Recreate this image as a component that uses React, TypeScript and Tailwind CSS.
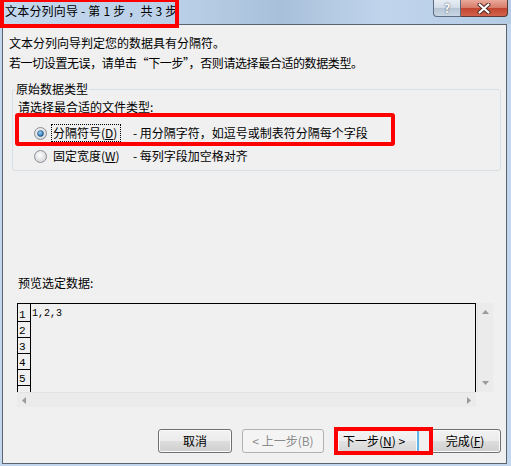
import React from "react";

const cjk = "font-['Microsoft_YaHei','Noto_Sans_CJK_SC',sans-serif]";

function Radio({ checked }: { checked?: boolean }) {
  const id = React.useId().replace(/:/g, "");
  return (
    <svg width="13" height="13" viewBox="0 0 13 13" className="shrink-0">
      <defs>
        <radialGradient id={`f${id}`} cx="45%" cy="40%" r="65%">
          <stop offset="0" stopColor="#ffffff" />
          <stop offset="1" stopColor="#cfd2d6" />
        </radialGradient>
        <radialGradient id={`d${id}`} cx="40%" cy="35%" r="70%">
          <stop offset="0" stopColor="#9bd5ff" />
          <stop offset="1" stopColor="#1a5a98" />
        </radialGradient>
      </defs>
      <circle cx="6.5" cy="6.5" r="6" fill={`url(#f${id})`} stroke="#8a8f95" />
      {checked && <circle cx="6.5" cy="6.5" r="3" fill={`url(#d${id})`} stroke="#1b4c7e" strokeWidth="0.6" />}
    </svg>
  );
}

interface BtnProps {
  children: React.ReactNode;
  className: string;
  disabled?: boolean;
}

function Btn({ children, className, disabled }: BtnProps) {
  return (
    <div
      className={`h-[24px] flex items-center justify-center rounded-[3px] border text-[12px] ${className} ${
        disabled
          ? "border-[#adb2b5] bg-[#f4f4f4] text-[#8b8b8b]"
          : "border-[#707070] bg-[linear-gradient(#f2f2f2_0%,#ebebeb_50%,#dddddd_51%,#cfcfcf_100%)] text-black shadow-[inset_0_0_0_1px_#fbfbfb]"
      }`}
    >
      {children}
    </div>
  );
}

export default function App() {
  const rows = ["1", "2", "3", "4", "5"];

  return (
    <div className={`relative w-[511px] h-[466px] flex flex-col overflow-hidden bg-[#c2d7ee] ${cjk}`}>
      {/* title bar */}
      <div className="h-[24px] flex items-start bg-[linear-gradient(90deg,#c3d7ed_0%,#bad0e8_35%,#a9c0da_55%,#c0d5ec_75%,#b4cbe4_100%)]">
        <div className="pl-[5px] mt-[3px] text-[12px] leading-[16px] tracking-[0.2px] whitespace-pre text-black">
          文本分列向导 - 第 1 步 ，共 3 步
        </div>
        <div className="ml-auto mr-[3px] flex">
          <div className="w-[28px] h-[17px] flex items-center justify-center border border-t-0 border-[#5d6d80] rounded-bl-[4px] bg-[linear-gradient(#e7edf4_0%,#d2dce7_50%,#b6c5d5_51%,#c9d6e3_100%)] text-white text-[12px] font-bold leading-none [text-shadow:0_0_2px_#33404f]">
            ?
          </div>
          <div className="w-[47px] h-[17px] flex items-center justify-center border border-t-0 border-l-0 border-[#5c3b36] rounded-br-[4px] bg-[linear-gradient(#e9a99b_0%,#d67a67_50%,#c2452f_51%,#d2624a_100%)]">
            <svg width="14" height="11" viewBox="0 0 14 11">
              <path d="M2.5 1.5 L11.5 9.5 M11.5 1.5 L2.5 9.5" stroke="#4a2620" strokeWidth="4" strokeLinecap="round" />
              <path d="M2.5 1.5 L11.5 9.5 M11.5 1.5 L2.5 9.5" stroke="#ffffff" strokeWidth="2.2" strokeLinecap="round" />
            </svg>
          </div>
        </div>
      </div>

      {/* client area */}
      <div className="flex-1 ml-[2px] mr-[4px] mb-[2px] border border-[#5b6572] bg-[#f0f0f0] text-black text-[12px] flex flex-col">
        <div className="pt-[8px] pl-[6px] leading-[20px]">
          <div>文本分列向导判定您的数据具有分隔符。</div>
          <div className="tracking-[-0.4px]">若一切设置无误，请单击“下一步”，否则请选择最合适的数据类型。</div>
        </div>

        <fieldset className="mt-[8px] ml-[9px] w-[489px] border border-[#d5dfe5] rounded-[3px] pb-[5px]">
          <legend className="ml-[2px] px-[1px] leading-[16px]">原始数据类型</legend>
          <div className="mt-[2px] pl-[5px] leading-[16px]">请选择最合适的文件类型:</div>
          <div className="mt-[9px] h-[18px] flex items-center pl-[21px]">
            <Radio checked />
            <div className="ml-[4px] h-[18px] w-[70px] flex items-center pl-[1px] border border-dotted border-black">
              分隔符号(<span className="underline">D</span>)
            </div>
            <div className="ml-[12px]">- 用分隔字符，如逗号或制表符分隔每个字段</div>
          </div>
          <div className="mt-[5px] h-[18px] flex items-center pl-[21px]">
            <Radio />
            <div className="ml-[6px] w-[68px]">
              固定宽度(<span className="underline">W</span>)
            </div>
            <div className="ml-[12px]">- 每列字段加空格对齐</div>
          </div>
        </fieldset>

        <div className="mt-[104px] pl-[15px] leading-[16px]">预览选定数据:</div>

        <div className="mt-[12px] ml-[14px] flex">
          <div className="w-[459px] flex flex-col">
            <div className="h-[89px] border border-b-0 border-black flex overflow-hidden">
              <div className="w-[13px] border-r border-black flex flex-col font-['Liberation_Mono',monospace] text-[11px]">
                {rows.map((r, i) => (
                  <div
                    key={r}
                    className={`${i === 0 ? "h-[18px]" : "h-[16px]"} shrink-0 border-b border-black flex items-end pl-[1px] leading-[12px]`}
                  >
                    {r}
                  </div>
                ))}
              </div>
              <div className="pl-[1px] pt-[3px] font-['Liberation_Mono',monospace] text-[10px] leading-[14px]">1,2,3</div>
            </div>
            <div className="h-[15px] bg-[#ebebeb] border-t border-[#e3e3e3] flex items-center justify-between px-[5px]">
              <svg width="4" height="7" viewBox="0 0 4 7">
                <path d="M4 0 L0 3.5 L4 7 Z" fill="#9a9a9a" />
              </svg>
              <svg width="4" height="7" viewBox="0 0 4 7">
                <path d="M0 0 L4 3.5 L0 7 Z" fill="#9a9a9a" />
              </svg>
            </div>
          </div>
          <div className="ml-[1px] w-[16px] h-[89px] bg-[#ebebeb] border-l border-[#e3e3e3] flex flex-col items-center justify-between py-[7px]">
            <svg width="7" height="4" viewBox="0 0 7 4">
              <path d="M0 4 L3.5 0 L7 4 Z" fill="#9a9a9a" />
            </svg>
            <svg width="7" height="4" viewBox="0 0 7 4">
              <path d="M0 0 L3.5 4 L7 0 Z" fill="#9a9a9a" />
            </svg>
          </div>
        </div>

        <div className="mt-[22px] pr-[5px] flex justify-end">
          <Btn className="w-[74px]">取消</Btn>
          <Btn className="w-[82px] ml-[10px]" disabled>
            &lt; 上一步(B)
          </Btn>
          <div className="w-[82px] ml-[13px] h-[24px] flex items-center pl-[5px] rounded-[3px] border border-[#3c7fb1] border-r-[2px] border-r-[#5fb4e8] bg-[linear-gradient(#f4f4f4_0%,#ededed_50%,#e2e2e2_51%,#d6d6d6_100%)] shadow-[inset_0_0_0_1px_#fbfbfb] text-[12px]">
            下一步(<span className="underline">N</span>) &gt;
          </div>
          <Btn className="w-[72px] ml-[10px]">
            完成(<span className="underline">F</span>)
          </Btn>
        </div>
      </div>

      {/* red annotation boxes */}
      <div className="absolute left-0 top-[-2px] w-[179px] h-[30px] border-[4px] border-[#ff0000]" />
      <div className="absolute left-[15px] top-[113px] w-[380px] h-[33px] border-[4px] border-[#ff0000] rounded-[3px]" />
      <div className="absolute left-[334px] top-[427px] w-[99px] h-[28px] border-[4px] border-[#ff0000]" />
    </div>
  );
}
